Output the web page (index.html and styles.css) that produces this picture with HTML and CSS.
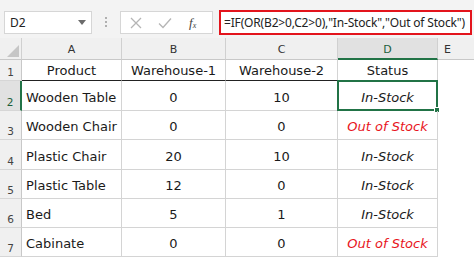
FILE: index.html
```html
<!DOCTYPE html>
<html>
<head>
<meta charset="utf-8">
<link rel="stylesheet" href="styles.css">
</head>
<body>
<div class="app">
  <div class="toolbar">
    <div class="namebox">
      <span class="ref">D2</span>
      <svg class="caret" width="8" height="5" viewBox="0 0 8 5"><path d="M0 0 H8 L4 5 Z" fill="#6b6b6b"/></svg>
    </div>
    <div class="dots"><i></i><i></i><i></i></div>
    <div class="fxbox">
      <svg class="icon" width="14" height="14" viewBox="0 0 14 14"><path d="M2 2 L12 12 M12 2 L2 12" stroke="#b5b5b5" stroke-width="1.3" fill="none"/></svg>
      <svg class="icon" width="16" height="14" viewBox="0 0 16 14"><path d="M2 7.5 L6 11.5 L14 2.5" stroke="#b5b5b5" stroke-width="1.3" fill="none"/></svg>
      <span class="fx">f<sub>x</sub></span>
    </div>
    <div class="formula">=IF(OR(B2&gt;0,C2&gt;0),"In-Stock","Out of Stock")</div>
  </div>
  <div class="sheet">
    <div class="corner"><svg width="12" height="12" viewBox="0 0 12 12"><path d="M12 0 V12 H0 Z" fill="#c6c6c6"/></svg></div>
    <div class="colh">A</div>
    <div class="colh">B</div>
    <div class="colh">C</div>
    <div class="colh sel">D</div>
    <div class="colh last">E</div>

    <div class="rowh">1</div>
    <div class="c hd">Product</div>
    <div class="c hd">Warehouse-1</div>
    <div class="c hd">Warehouse-2</div>
    <div class="c hd">Status</div>
    <div class="e"></div>

    <div class="rowh sel">2</div>
    <div class="c l">Wooden Table</div>
    <div class="c">0</div>
    <div class="c">10</div>
    <div class="c s active">In-Stock<span class="handle"></span></div>
    <div class="e"></div>

    <div class="rowh">3</div>
    <div class="c l">Wooden Chair</div>
    <div class="c">0</div>
    <div class="c">0</div>
    <div class="c s out">Out of Stock</div>
    <div class="e"></div>

    <div class="rowh">4</div>
    <div class="c l">Plastic Chair</div>
    <div class="c">20</div>
    <div class="c">10</div>
    <div class="c s">In-Stock</div>
    <div class="e"></div>

    <div class="rowh">5</div>
    <div class="c l">Plastic Table</div>
    <div class="c">12</div>
    <div class="c">0</div>
    <div class="c s">In-Stock</div>
    <div class="e"></div>

    <div class="rowh">6</div>
    <div class="c l">Bed</div>
    <div class="c">5</div>
    <div class="c">1</div>
    <div class="c s">In-Stock</div>
    <div class="e"></div>

    <div class="rowh">7</div>
    <div class="c l">Cabinate</div>
    <div class="c">0</div>
    <div class="c">0</div>
    <div class="c s out">Out of Stock</div>
    <div class="e"></div>
  </div>
</div>
</body>
</html>
```
FILE: styles.css
```css
* { box-sizing: border-box; }
html, body { margin: 0; padding: 0; background: #fff; }
.app { width: 474px; height: 258px; overflow: hidden; background: #fff; }

.toolbar {
  height: 38px;
  background: #f3f3f3;
  display: flex;
  align-items: flex-start;
  padding: 10px 0 0 4px;
}
.namebox {
  width: 88px; height: 23px;
  margin-top: 1px;
  background: #fff;
  border: 1px solid #d6d6d6;
  display: flex; align-items: center; justify-content: space-between;
  padding: 0 5px 0 5px;
  font-family: "Noto Sans", sans-serif; font-size: 12px; color: #222;
}
.dots {
  width: 28px; height: 24px;
  display: flex; flex-direction: column; align-items: center; justify-content: center; gap: 2px;
}
.dots i { width: 2px; height: 2px; background: #b0b0b0; display: block; }
.fxbox {
  width: 93px; height: 23px; margin-top: 1px;
  background: #fff;
  border: 1px solid #d6d6d6;
  display: flex; align-items: center;
  padding: 0 0 0 8px; gap: 14px;
}
.fx {
  font-family: "Liberation Serif", serif; font-style: italic; font-size: 13px; color: #444;
  margin-left: 2px;
}
.fx sub { font-size: 8px; vertical-align: -1px; }
.formula {
  margin-left: 6px;
  width: 253px; height: 25px;
  border: 2px solid #e3141c;
  background: #fff;
  font-family: "Noto Sans", sans-serif; font-size: 12px; color: #222;
  letter-spacing: -0.17px;
  padding: 2px 0 0 3px;
  white-space: nowrap; overflow: hidden;
}

.sheet {
  display: grid;
  grid-template-columns: 22px 100px 104px 112px 100px 1fr;
  grid-template-rows: 22px 21px 30px 29px 30px 29px 29px 29px;
  font-family: "DejaVu Sans", Verdana, sans-serif;
  font-size: 13px;
  color: #1a1a1a;
}
.corner {
  background: #f0f0f0;
  border-right: 1px solid #d0d0d0;
  border-bottom: 1px solid #c8c8c8;
  display: flex; align-items: flex-end; justify-content: flex-end;
  padding: 0 2px 2px 0;
}
.colh {
  background: #f0f0f0;
  border-right: 1px solid #d0d0d0;
  border-bottom: 1px solid #c8c8c8;
  font-size: 11px; color: #333;
  display: flex; align-items: center; justify-content: center;
  padding-top: 2px;
}
.colh.sel { background: #e1e1e1; border-bottom: 2px solid #217346; color: #1d5e3a; }
.colh.last { border-right: none; justify-content: flex-start; padding-left: 6px; }
.rowh {
  background: #f0f0f0;
  border-right: 1px solid #c8c8c8;
  border-bottom: 1px solid #d6d6d6;
  font-size: 10.5px; color: #444;
  display: flex; align-items: flex-end; justify-content: center;
  padding-bottom: 2px;
}
.rowh.sel { background: #e1e1e1; border-right: 2px solid #217346; color: #1d5e3a; }
.c {
  border-right: 1px solid #d4d4d4;
  border-bottom: 1px solid #d4d4d4;
  display: flex; align-items: flex-end; justify-content: center;
  padding-bottom: 5px;
  white-space: nowrap;
  position: relative;
}
.c.hd { border-bottom: 1px solid #222; padding-bottom: 2px; }
.c.l { justify-content: flex-start; padding-left: 4px; }
.c.s { font-style: italic; }
.c.out { color: #e8141c; }
.c.active { border: 2px solid #217346; margin: -1px 0 0 -1px; padding-bottom: 4px; }
.handle {
  position: absolute; right: -4px; bottom: -4px;
  width: 6px; height: 6px; background: #217346; border: 1px solid #fff;
}
.e { background: #fff; }
```
